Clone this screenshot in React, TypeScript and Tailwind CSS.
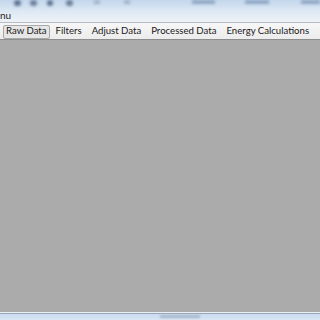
import React from "react";

const tabs = ["Raw Data", "Filters", "Adjust Data", "Processed Data", "Energy Calculations"];

export default function App() {
  return (
    <div className="w-[320px] h-[320px] flex flex-col overflow-hidden bg-[#ababab] font-['Lato',sans-serif]">
      {/* blurred ribbon + title */}
      <div className="h-[22px] flex flex-col bg-gradient-to-b from-[#c3d7ec] via-[#dde8f4] to-[#eef2f7] overflow-hidden">
        <div className="h-[7px] flex items-start">
          <div className="ml-[14px] w-[7px] h-[6px] rounded-sm bg-[#5d7491] blur-[1.5px]" />
          <div className="ml-[9px] w-[7px] h-[6px] rounded-sm bg-[#6b7f99] blur-[1.5px]" />
          <div className="ml-[10px] w-[7px] h-[6px] rounded-sm bg-[#5d7491] blur-[1.5px]" />
          <div className="ml-[13px] w-[7px] h-[6px] rounded-sm bg-[#6b7f99] blur-[1.5px]" />
          <div className="ml-[21px] w-[6px] h-[4px] bg-[#9fb3cc] blur-[1.5px]" />
          <div className="ml-[24px] w-[6px] h-[4px] bg-[#9fb3cc] blur-[1.5px]" />
          <div className="ml-[62px] w-[24px] h-[4px] bg-[#8ea6c4] blur-[1.5px]" />
          <div className="ml-[30px] w-[24px] h-[4px] bg-[#8ea6c4] blur-[1.5px]" />
          <div className="ml-[32px] w-[20px] h-[4px] bg-[#8ea6c4] blur-[1.5px]" />
        </div>
        <div className="mt-[2px] text-[10px] leading-[12px] text-[#1e1e1e]">nu</div>
      </div>
      {/* tab strip */}
      <div className="h-[18px] flex items-center px-[3px] pt-[1px] bg-gradient-to-b from-[#f7f7f7] to-[#ececec] border-t border-[#b9bec6] border-b border-b-[#8d8d8d]">
        {tabs.map((t, i) => (
          <div
            key={t}
            className={
              i === 0
                ? "shrink-0 whitespace-nowrap h-[14px] px-[2px] mr-[1px] flex items-center text-[9.6px] text-[#1a1a1a] border border-[#a8a8a8] bg-[#e6e6e6] rounded-[2px]"
                : "shrink-0 whitespace-nowrap h-[14px] px-[5px] flex items-center text-[9.6px] text-[#1a1a1a]"
            }
          >
            {t}
          </div>
        ))}
      </div>
      <div className="flex-1 bg-[#ababab]" />
      <div className="h-[8px] flex flex-col">
        <div className="h-[1px] bg-[#e9eef4]" />
        <div className="h-[1px] bg-[#9ba7b6]" />
        <div className="flex-1 flex bg-gradient-to-b from-[#c9dbef] to-[#d9e6f4]">
          <div className="ml-[160px] mt-[1px] w-[40px] h-[3px] bg-[#a8b8cc] blur-[1px]" />
        </div>
      </div>
    </div>
  );
}
